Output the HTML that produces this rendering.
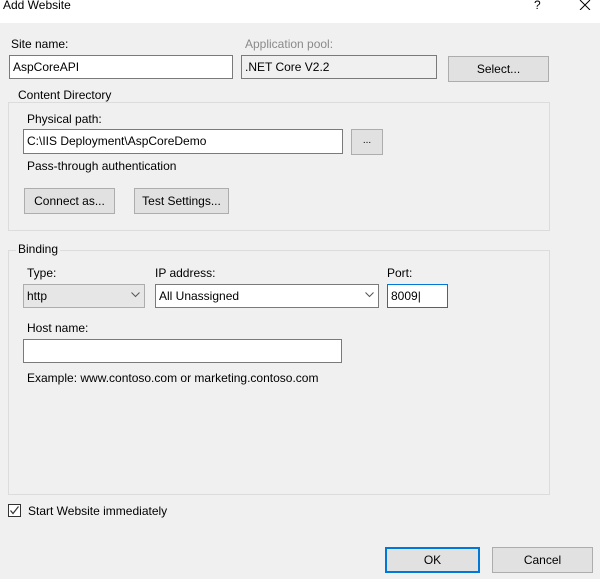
<!DOCTYPE html>
<html><head><style>
*{box-sizing:border-box;margin:0;padding:0}
body{width:600px;height:579px;background:#f0f0f0;font-family:"Liberation Sans",sans-serif;font-size:12px;color:#000;position:relative;overflow:hidden}
.a{position:absolute;white-space:nowrap}
.title{position:absolute;left:0;top:0;width:600px;height:23px;background:#fff}
.in{position:absolute;background:#fff;border:1px solid #7a7a7a;padding:0 3px;line-height:22px}
.btn{position:absolute;background:#e1e1e1;border:1px solid #adadad;text-align:center}
.grp{position:absolute;border:1px solid #dcdcdc}
.lg{position:absolute;background:#f0f0f0;padding:0 2px}
</style></head><body>
<div class="title"></div>
<div class="a" style="left:3px;top:-2px;font-size:12px">Add Website</div>
<div class="a" style="left:534px;top:-2px;font-size:12px">?</div>
<svg class="a" style="left:579px;top:0" width="12" height="10"><path d="M1 0L11 10M11 0L1 10" stroke="#000" stroke-width="1"/></svg>

<div class="a" style="left:11px;top:37px">Site name:</div>
<div class="in" style="left:9px;top:55px;width:224px;height:24px">AspCoreAPI</div>
<div class="a" style="left:245px;top:37px;color:#8a8a8a">Application pool:</div>
<div class="in" style="left:241px;top:55px;width:196px;height:24px;background:#f0f0f0">.NET Core V2.2</div>
<div class="btn" style="left:448px;top:56px;width:101px;height:26px;line-height:24px">Select...</div>

<div class="grp" style="left:8px;top:102px;width:542px;height:129px"></div>
<div class="lg a" style="left:16px;top:88px">Content Directory</div>
<div class="a" style="left:27px;top:112px">Physical path:</div>
<div class="in" style="left:23px;top:129px;width:320px;height:25px;line-height:23px">C:\IIS Deployment\AspCoreDemo</div>
<div class="btn" style="left:351px;top:129px;width:32px;height:26px;line-height:22px;font-size:10px">...</div>
<div class="a" style="left:27px;top:159px">Pass-through authentication</div>
<div class="btn" style="left:24px;top:188px;width:91px;height:26px;line-height:24px">Connect as...</div>
<div class="btn" style="left:134px;top:188px;width:95px;height:26px;line-height:24px">Test Settings...</div>

<div class="grp" style="left:8px;top:250px;width:542px;height:245px"></div>
<div class="lg a" style="left:16px;top:242px">Binding</div>
<div class="a" style="left:27px;top:266px">Type:</div>
<div class="in" style="left:23px;top:284px;width:122px;height:24px;background:#e6e6e6;border-color:#adadad">http</div>
<svg class="a" style="left:131px;top:292px" width="9" height="6"><path d="M0.5 0.5L4.5 4.5L8.5 0.5" stroke="#555" fill="none"/></svg>
<div class="a" style="left:155px;top:266px">IP address:</div>
<div class="in" style="left:155px;top:284px;width:224px;height:24px">All Unassigned</div>
<svg class="a" style="left:365px;top:292px" width="9" height="6"><path d="M0.5 0.5L4.5 4.5L8.5 0.5" stroke="#555" fill="none"/></svg>
<div class="a" style="left:387px;top:266px">Port:</div>
<div class="in" style="left:387px;top:284px;width:61px;height:24px;border-color:#0078d7">8009|</div>
<div class="a" style="left:27px;top:321px">Host name:</div>
<div class="in" style="left:23px;top:339px;width:319px;height:24px"></div>
<div class="a" style="left:27px;top:371px">Example: www.contoso.com or marketing.contoso.com</div>

<div class="a" style="left:8px;top:504px;width:13px;height:13px;border:1px solid #333;background:#fff"></div>
<svg class="a" style="left:8px;top:504px" width="13" height="13"><path d="M2.5 6.5L5 9.5L10.5 2.5" stroke="#333" fill="none" stroke-width="1.2"/></svg>
<div class="a" style="left:28px;top:504px">Start Website immediately</div>

<div class="btn" style="left:385px;top:547px;width:95px;height:26px;line-height:22px;border:2px solid #0078d7">OK</div>
<div class="btn" style="left:492px;top:547px;width:101px;height:26px;line-height:24px">Cancel</div>
</body></html>
